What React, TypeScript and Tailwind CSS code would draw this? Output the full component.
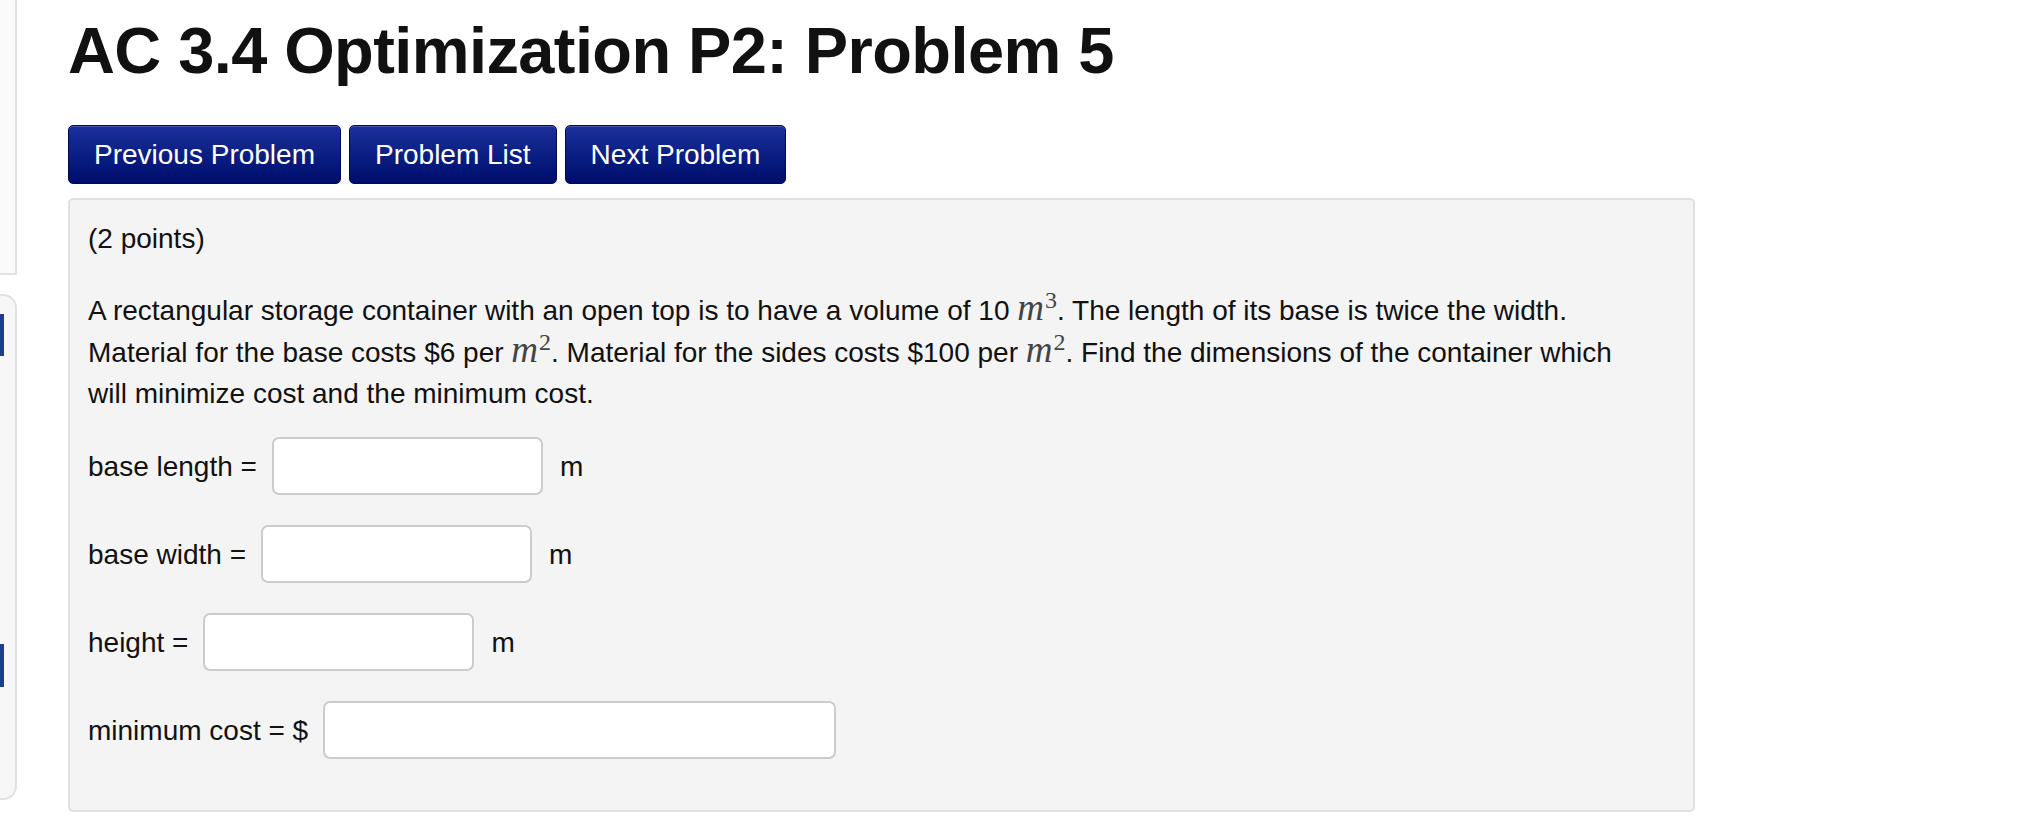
import { useState } from "react"

// bouton de navigation (style webwork, dégradé bleu marine)
const NavButton = ({ label }: { label: string }) => (
  <button className="h-[59px] px-[25px] rounded-[5px] text-white text-[28px] leading-none bg-gradient-to-b from-[#1b2f9c] to-[#000c6c] border border-[#000a55] shadow-[inset_0_1px_0_rgba(255,255,255,0.2)] cursor-pointer">
    {label}
  </button>
)

// m avec exposant, façon MathJax
const Unit = ({ exp }: { exp: string }) => (
  <span className="text-[#444] font-['Liberation_Serif',serif] leading-none">
    <i className="text-[37px]">m</i>
    <sup className="text-[24px] not-italic relative -top-[12px] ml-[1px]">{exp}</sup>
  </span>
)

const Row = ({ label, width, unit }: { label: string; width: string; unit?: string }) => {
  const [val, setVal] = useState("")
  return (
    <div className="flex items-center h-[58px]">
      <span className="mr-[15px]">{label}</span>
      <input
        className={`${width} h-[58px] bg-white border-2 border-[#ccc] rounded-[7px] px-2 outline-none`}
        value={val}
        onChange={(e) => setVal(e.target.value)}
      />
      {unit && <span className="ml-[17px]">{unit}</span>}
    </div>
  )
}

export default function App() {
  return (
    <div className="flex w-[2041px] h-[827px] bg-white overflow-hidden font-['Liberation_Sans',Arial,sans-serif] text-[#111]">
      {/* barre latérale */}
      <div className="w-[17px] flex flex-col shrink-0">
        <div className="h-[275px] border-r-2 border-b-2 border-[#e2e2e2] bg-[#fafafa]" />
        <div className="mt-[19px] h-[506px] border-2 border-l-0 border-[#e2e2e2] rounded-r-[14px] bg-[#f7f7f7] flex flex-col">
          <div className="mt-[18px] w-[4px] h-[42px] bg-[#1d3d8f]" />
          <div className="mt-[288px] w-[4px] h-[43px] bg-[#1d3d8f]" />
        </div>
      </div>

      {/* contenu */}
      <div className="pl-[51px] flex flex-col">
        <h1 className="font-bold text-[65px] leading-none mt-[18px] tracking-[-0.6px]">AC 3.4 Optimization P2: Problem 5</h1>

        <div className="flex gap-[8px] mt-[42px]">
          <NavButton label="Previous Problem" />
          <NavButton label="Problem List" />
          <NavButton label="Next Problem" />
        </div>

        <div className="mt-[14px] w-[1627px] h-[614px] bg-[#f4f4f4] border-2 border-[#e0e0e0] rounded-[5px] px-[18px] pt-[18px] text-[28px] leading-[41px]">
          <p>(2 points)</p>
          <p className="mt-[30px]">
            A rectangular storage container with an open top is to have a volume of 10 <Unit exp="3" />. The length of its base is twice the width.
            <br />
            Material for the base costs $6 per <Unit exp="2" />. Material for the sides costs $100 per <Unit exp="2" />. Find the dimensions of the container which
            <br />
            will minimize cost and the minimum cost.
          </p>

          <div className="flex flex-col gap-[30px] mt-[23px]">
            <Row label="base length =" width="w-[271px]" unit="m" />
            <Row label="base width =" width="w-[271px]" unit="m" />
            <Row label="height =" width="w-[271px]" unit="m" />
            <Row label="minimum cost = $" width="w-[513px]" />
          </div>
        </div>
      </div>
    </div>
  )
}
